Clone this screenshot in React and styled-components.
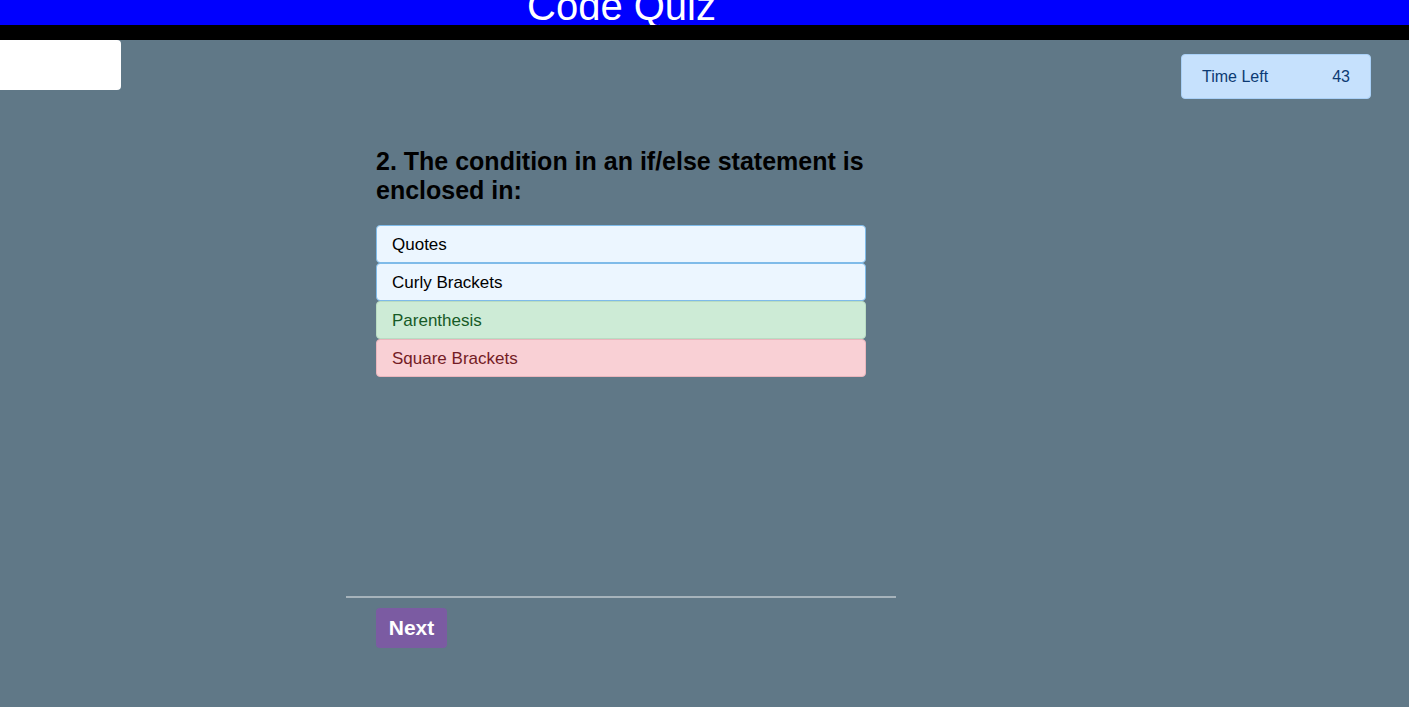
import React from "react";
import styled, { createGlobalStyle } from "styled-components";

const Global = createGlobalStyle`
  html, body { margin: 0; padding: 0; }
  body {
    background: #607887;
    font-family: "Liberation Sans", Arial, Helvetica, sans-serif;
    min-height: 707px;
    overflow: hidden;
  }
`;

const Header = styled.header`
  height: 25px;
  background: #0000ff;
  border-bottom: 15px solid #000;
  overflow: hidden;
  display: flex;
  justify-content: flex-start;
  padding-left: 527px;
`;

const Title = styled.h1`
  margin: -17px 0 0;
  font-size: 40px;
  font-weight: 400;
  color: #fff;
  line-height: 46px;
  white-space: nowrap;
`;

const TopRow = styled.div`
  display: flex;
  justify-content: space-between;
  align-items: flex-start;
`;

const SideButton = styled.button`
  width: 121px;
  height: 50px;
  background: #fff;
  border: none;
  border-radius: 0 4px 4px 0;
  padding: 0;
`;

const Timer = styled.div`
  margin: 14px 38px 0 0;
  width: 190px;
  height: 45px;
  box-sizing: border-box;
  display: flex;
  align-items: center;
  justify-content: space-between;
  padding: 0 20px 0 20px;
  background: #c6e1fd;
  border: 1px solid #a9d0f7;
  border-radius: 4px;
  color: #0c3a73;
  font-size: 16px;
`;

const Main = styled.main`
  width: 550px;
  margin-left: 346px;
  margin-top: 48px;
  display: flex;
  flex-direction: column;
`;

const QuizBody = styled.section`
  padding: 0 30px;
  height: 449px;
`;

const Question = styled.h2`
  margin: 0 0 20px;
  font-size: 25px;
  line-height: 29px;
  font-weight: 700;
  color: #000;
`;

const OptionList = styled.ul`
  list-style: none;
  margin: 0;
  padding: 0;
  display: flex;
  flex-direction: column;
`;

const tones = {
  idle: { bg: "#ecf6ff", border: "#7fbbe9", color: "#000" },
  correct: { bg: "#cdebd6", border: "#b9dcc3", color: "#165a26" },
  wrong: { bg: "#f9d0d5", border: "#eab6bd", color: "#741c25" },
};

const Option = styled.li`
  height: 38px;
  box-sizing: border-box;
  display: flex;
  align-items: center;
  padding: 1px 15px 0;
  font-size: 17px;
  background: ${(p) => tones[p.$tone].bg};
  border: 1px solid ${(p) => tones[p.$tone].border};
  color: ${(p) => tones[p.$tone].color};
  border-radius: 4px;
`;

const Divider = styled.hr`
  margin: 0;
  border: none;
  height: 2px;
  background: #a6b3bb;
`;

const Footer = styled.div`
  padding: 10px 30px 0;
  display: flex;
`;

const NextButton = styled.button`
  height: 40px;
  width: 71px;
  padding: 0;
  background: #7b5ba2;
  color: #fff;
  border: none;
  border-radius: 4px;
  font-family: inherit;
  font-size: 21px;
  font-weight: 700;
`;

const options = [
  { text: "Quotes", tone: "idle" },
  { text: "Curly Brackets", tone: "idle" },
  { text: "Parenthesis", tone: "correct" },
  { text: "Square Brackets", tone: "wrong" },
];

export default function App() {
  return (
    <>
      <Global />
      <Header>
        <Title>Code Quiz</Title>
      </Header>
      <TopRow>
        <SideButton aria-label="menu" />
        <Timer>
          <span>Time Left</span>
          <span>43</span>
        </Timer>
      </TopRow>
      <Main>
        <QuizBody>
          <Question>2. The condition in an if/else statement is enclosed in:</Question>
          <OptionList>
            {options.map((o) => (
              <Option key={o.text} $tone={o.tone}>
                {o.text}
              </Option>
            ))}
          </OptionList>
        </QuizBody>
        <Divider />
        <Footer>
          <NextButton>Next</NextButton>
        </Footer>
      </Main>
    </>
  );
}
